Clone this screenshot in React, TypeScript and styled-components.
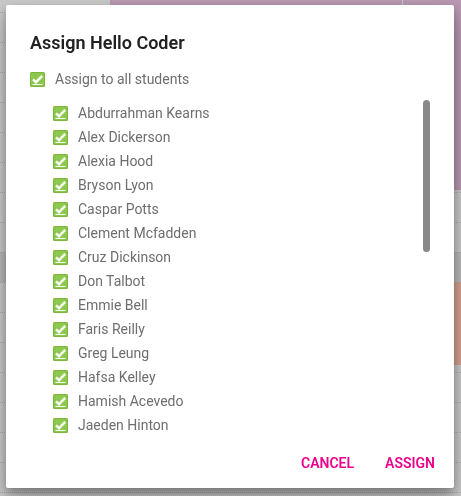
import React from "react"
import styled, { createGlobalStyle } from "styled-components"

const GlobalStyle = createGlobalStyle`
    html, body {
        margin: 0;
        padding: 0;
        width: 461px;
        height: 496px;
        overflow: hidden;
        font-family: Roboto, "Noto Sans", sans-serif;
    }
`

const students = [
    "Abdurrahman Kearns", "Alex Dickerson", "Alexia Hood", "Bryson Lyon", "Caspar Potts",
    "Clement Mcfadden", "Cruz Dickinson", "Don Talbot", "Emmie Bell", "Faris Reilly",
    "Greg Leung", "Hafsa Kelley", "Hamish Acevedo", "Jaeden Hinton",
]

// ---- timetable behind the modal ----

const Timetable = styled.div`
    position: relative;
    width: 461px;
    height: 496px;
    background: #c9c9c9;
    padding-top: 12px;
    box-sizing: border-box;
    overflow: hidden;
`

const Slot = styled.div<{ $dark?: boolean }>`
    height: 30px;
    box-sizing: border-box;
    border-top: 1px dotted #a9a9a9;
    background: ${p => p.$dark ? "#b9b9b9" : "transparent"};
`

const Event = styled.div<{ $color: string, $left: number, $top: number, $w: number, $h: number }>`
    position: absolute;
    left: ${p => p.$left}px;
    top: ${p => p.$top}px;
    width: ${p => p.$w}px;
    height: ${p => p.$h}px;
    background: ${p => p.$color};
`

// ---- dialog ----

const Overlay = styled.div`
    position: fixed;
    inset: 0;
    display: flex;
    justify-content: flex-start;
    align-items: flex-start;
    padding: 5px 0 0 6px;
`

const Dialog = styled.div`
    width: 448px;
    height: 483px;
    background: #fff;
    border-radius: 2px;
    box-shadow: 0 10px 20px rgba(0,0,0,0.28), 0 4px 8px rgba(0,0,0,0.22);
    display: flex;
    flex-direction: column;
    box-sizing: border-box;
`

const Body = styled.div`
    padding: 24px 24px 0;
    display: flex;
    flex-direction: column;
`

const Title = styled.h3`
    margin: 0 0 10px;
    font-size: 18px;
    line-height: 28px;
    font-weight: 600;
    color: #212121;
`

const Row = styled.label<{ $indent?: number }>`
    display: flex;
    align-items: center;
    height: 24px;
    gap: 10px;
    padding-left: ${p => p.$indent || 0}px;
    font-size: 14px;
    color: #6e6e6e;
    white-space: nowrap;

    svg {
        flex: 0 0 15px;
        width: 15px;
        height: 15px;
    }
`

const List = styled.div`
    position: relative;
    margin-top: 9px;
    height: 337px;
    padding-top: 1px;
    box-sizing: border-box;
    overflow: hidden;
`

const ScrollThumb = styled.div<{ $size: number }>`
    position: absolute;
    top: 0;
    right: 0;
    width: 7px;
    height: ${p => p.$size}px;
    background: #888;
    border-radius: 4px;
`

const Actions = styled.div`
    display: flex;
    justify-content: flex-end;
    gap: 15px;
    padding: 8px 11px 7px 8px;
`

const FlatButton = styled.button`
    height: 36px;
    min-width: 64px;
    padding: 0 8px;
    border: 0;
    background: transparent;
    color: #ec008c;
    font-family: Roboto, sans-serif;
    font-size: 14px;
    font-weight: 600;
    text-transform: uppercase;
    cursor: pointer;
`

const Check = () => (
    <svg viewBox="0 0 15 15">
        <rect x="0" y="0" width="15" height="15" rx="1.5" fill="#7cb63a" />
        <rect x="1" y="1" width="13" height="13" rx="1" fill="#8cc84b" />
        <path d="M3 7.3 L6 10.2 L12.2 3.8" stroke="#fff" strokeWidth="2.4" fill="none" />
        <path d="M2.5 12.5 H12.5" stroke="#fff" strokeWidth="1" />
    </svg>
)

export default function App() {
    return (
        <>
            <GlobalStyle />
            <Timetable>
                {Array.from({ length: 17 }).map((_, i) => <Slot key={i} $dark={i === 8} />)}
                <Event $color="#b898b2" $left={110} $top={-40} $w={292} $h={230} />
                <Event $color="#b898b2" $left={403} $top={-40} $w={80} $h={230} />
                <Event $color="#d3a08f" $left={110} $top={282} $w={360} $h={83} />
            </Timetable>
            <Overlay>
                <Dialog>
                    <Body>
                        <Title>Assign Hello Coder</Title>
                        <Row><Check />Assign to all students</Row>
                        <List>
                            {students.map(s => <Row key={s} $indent={23}><Check />{s}</Row>)}
                            <ScrollThumb $size={152} />
                        </List>
                    </Body>
                    <Actions>
                        <FlatButton>Cancel</FlatButton>
                        <FlatButton>Assign</FlatButton>
                    </Actions>
                </Dialog>
            </Overlay>
        </>
    )
}
